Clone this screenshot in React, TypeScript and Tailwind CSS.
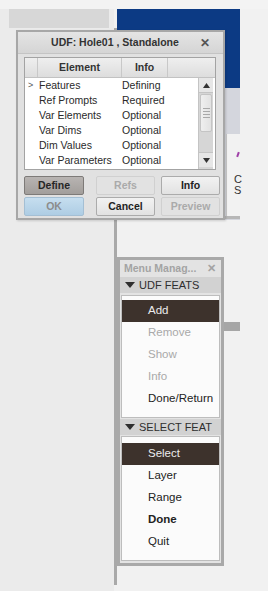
import React from "react"

const rows = [
    { name: "Features", info: "Defining", current: true },
    { name: "Ref Prompts", info: "Required" },
    { name: "Var Elements", info: "Optional" },
    { name: "Var Dims", info: "Optional" },
    { name: "Dim Values", info: "Optional" },
    { name: "Var Parameters", info: "Optional" },
]

const udfItems = [
    { label: "Add", active: true },
    { label: "Remove", disabled: true },
    { label: "Show", disabled: true },
    { label: "Info", disabled: true },
    { label: "Done/Return" },
]

const selectItems = [
    { label: "Select", active: true },
    { label: "Layer" },
    { label: "Range" },
    { label: "Done", bold: true },
    { label: "Quit" },
]

type MenuItem = { label: string; active?: boolean; disabled?: boolean; bold?: boolean }

function Triangle() {
    return (
        <svg width="10" height="6" viewBox="0 0 10 6" className="shrink-0">
            <path d="M0 0 L10 0 L5 6 Z" fill="#2f2f2f" />
        </svg>
    )
}

function MenuHeader({ label }: { label: string }) {
    return (
        <div className="flex items-center gap-[4px] h-[16px] bg-[#d2d2d2] pl-[5px] text-[11px] text-[#2e2e2e]">
            <Triangle />
            <span>{label}</span>
        </div>
    )
}

function MenuList({ items, pt }: { items: MenuItem[]; pt: string }) {
    return (
        <div className={`mx-[1px] bg-[#fbfbfb] border border-[#bdbdbd] ${pt} pb-[7px]`}>
            {items.map((item) => (
                <div
                    key={item.label}
                    className={`h-[22px] flex items-center pl-[26px] text-[11.5px] ${
                        item.active
                            ? "bg-[#3d322c] text-[#ececec]"
                            : item.disabled
                              ? "text-[#a9a9a9]"
                              : "text-[#222222]"
                    } ${item.bold ? "font-bold" : ""}`}
                >
                    {item.label}
                </div>
            ))}
        </div>
    )
}

function Btn({ label, kind, className }: { label: string; kind: "pressed" | "normal" | "disabled" | "ok"; className?: string }) {
    const styles = {
        pressed: "bg-gradient-to-b from-[#b8b4b2] to-[#a29e9b] border-[#7d7a78] text-[#262626]",
        normal: "bg-gradient-to-b from-[#f2f2f2] to-[#e2e2e2] border-[#ababab] text-[#222222]",
        disabled: "bg-[#e2e2e2] border-[#d0d0d0] text-[#aaaaaa]",
        ok: "bg-gradient-to-b from-[#c6deef] to-[#aecde4] border-[#a4bfd4] text-[#8c8c8c]",
    }
    return (
        <div
            className={`h-[19px] flex items-center justify-center rounded-[2px] border text-[10.5px] font-bold ${styles[kind]} ${className ?? ""}`}
        >
            {label}
        </div>
    )
}

function UdfDialog() {
    return (
        <div className="absolute left-[16px] top-[30px] w-[209px] h-[190px] border-2 border-[#a7a7a7] bg-[#e1e1e1] shadow-[1px_1px_2px_rgba(0,0,0,0.15)] flex flex-col">
            <div className="h-[22px] flex items-center bg-gradient-to-b from-[#e4e4e4] to-[#d5d5d5] border-b border-[#c4c4c4]">
                <span className="flex-1 text-center pl-[12px] text-[10.5px] font-bold text-[#333333]">
                    UDF: Hole01 , Standalone
                </span>
                <span className="w-[14px] mr-[9px] text-[12px] font-bold text-[#555555]">✕</span>
            </div>

            <div className="mt-[3px] ml-[6px] w-[192px] h-[113px] border border-[#a3a3a3] bg-white flex flex-col">
                <div className="h-[20px] flex bg-gradient-to-b from-[#efefef] to-[#dddddd] border-b border-[#c2c2c2] text-[10.5px] font-bold text-[#333333]">
                    <div className="w-[13px] border-r border-[#c8c8c8]" />
                    <div className="w-[84px] border-r border-[#c8c8c8] flex items-center justify-center">Element</div>
                    <div className="w-[46px] border-r border-[#c8c8c8] flex items-center justify-center">Info</div>
                    <div className="flex-1" />
                </div>
                <div className="flex-1 flex">
                    <div className="flex-1 flex flex-col">
                        {rows.map((r) => (
                            <div key={r.name} className="h-[15px] flex items-center text-[10.5px] text-[#2a2a2a]">
                                <span className="w-[14px] pl-[3px] text-[9px] text-[#555555]">{r.current ? ">" : ""}</span>
                                <span className="w-[83px]">{r.name}</span>
                                <span>{r.info}</span>
                            </div>
                        ))}
                    </div>
                    <div className="w-[15px] mr-[2px] flex flex-col bg-[#d6d6d6] border-l border-[#c4c4c4]">
                        <div className="h-[15px] flex items-center justify-center bg-[#e6e6e6] border-b border-[#c4c4c4]">
                            <svg width="7" height="5" viewBox="0 0 7 5">
                                <path d="M0 5 L7 5 L3.5 0 Z" fill="#333333" />
                            </svg>
                        </div>
                        <div className="h-[38px] mx-[1px] mt-[1px] flex flex-col items-center justify-center gap-[2px] bg-gradient-to-r from-[#efefef] to-[#e2e2e2] border border-[#c4c4c4] rounded-[2px]">
                            <div className="w-[7px] h-px bg-[#a8a8a8]" />
                            <div className="w-[7px] h-px bg-[#a8a8a8]" />
                            <div className="w-[7px] h-px bg-[#a8a8a8]" />
                            <div className="w-[7px] h-px bg-[#a8a8a8]" />
                        </div>
                        <div className="flex-1" />
                        <div className="h-[15px] mb-[2px] flex items-center justify-center bg-[#e6e6e6] border-t border-[#c4c4c4]">
                            <svg width="7" height="5" viewBox="0 0 7 5">
                                <path d="M0 0 L7 0 L3.5 5 Z" fill="#333333" />
                            </svg>
                        </div>
                    </div>
                </div>
            </div>

            <div className="mt-[6px] ml-[6px] flex">
                <Btn label="Define" kind="pressed" className="w-[60px]" />
                <Btn label="Refs" kind="disabled" className="w-[59px] ml-[12px]" />
                <Btn label="Info" kind="normal" className="w-[59px] ml-[6px]" />
            </div>
            <div className="mt-[2px] ml-[6px] flex">
                <Btn label="OK" kind="ok" className="w-[60px]" />
                <Btn label="Cancel" kind="normal" className="w-[59px] ml-[12px]" />
                <Btn label="Preview" kind="disabled" className="w-[59px] ml-[6px]" />
            </div>
        </div>
    )
}

function MenuManager() {
    return (
        <div className="absolute left-[117px] top-[257px] w-[107px] h-[309px] border-[3px] border-[#a9a9a9] bg-[#e3e3e3] flex flex-col">
            <div className="h-[17px] flex items-center justify-between pl-[4px] pr-[5px] text-[10.5px] font-bold text-[#a3a3a3]">
                <span>Menu Manag...</span>
                <span className="text-[11px]">✕</span>
            </div>
            <MenuHeader label="UDF FEATS" />
            <div className="h-[2px]" />
            <MenuList items={udfItems} pt="pt-[4px]" />
            <div className="h-px" />
            <MenuHeader label="SELECT FEAT" />
            <div className="h-px" />
            <MenuList items={selectItems} pt="pt-[6px]" />
        </div>
    )
}

export default function App() {
    return (
        <div
            className="relative w-[268px] h-[591px] overflow-hidden bg-[#f1f1f1]"
            style={{ fontFamily: '"Liberation Sans", Arial, sans-serif' }}
        >
            {/* desktop behind the windows */}
            <div className="absolute left-0 top-0 w-[114px] h-[591px] bg-[#ebebeb]" />
            <div className="absolute left-0 top-0 w-[268px] h-[9px] bg-[#f3f3f3]" />
            <div className="absolute left-[9px] top-[9px] w-[100px] h-[19px] bg-[#d7d7d7]" />
            <div className="absolute left-[117px] top-[9px] w-[123px] h-[79px] bg-[#0c3a84]" />
            <div className="absolute left-[117px] top-[88px] w-[123px] h-[132px] bg-[#d4d6dd]" />
            <div className="absolute left-[226px] top-[134px] w-[14px] h-[82px] bg-[#f2f2f2] border-l border-[#c9c9c9] text-[11px] text-[#333333] leading-[11px]">
                <div className="absolute left-[10px] top-[18px] w-[2px] h-[5px] bg-[#a040a8] rotate-[20deg]" />
                <div className="absolute left-[7px] top-[40px]">C</div>
                <div className="absolute left-[7px] top-[51px]">S</div>
            </div>
            <div className="absolute left-[117px] top-[216px] w-[123px] h-[3px] bg-[#b7b7b7]" />
            <div className="absolute left-[114px] top-[28px] w-[3px] h-[557px] bg-[#a9a9a9]" />
            <div className="absolute left-[224px] top-[322px] w-[16px] h-[9px] bg-[#a6a6a6]" />

            <UdfDialog />
            <MenuManager />
        </div>
    )
}
